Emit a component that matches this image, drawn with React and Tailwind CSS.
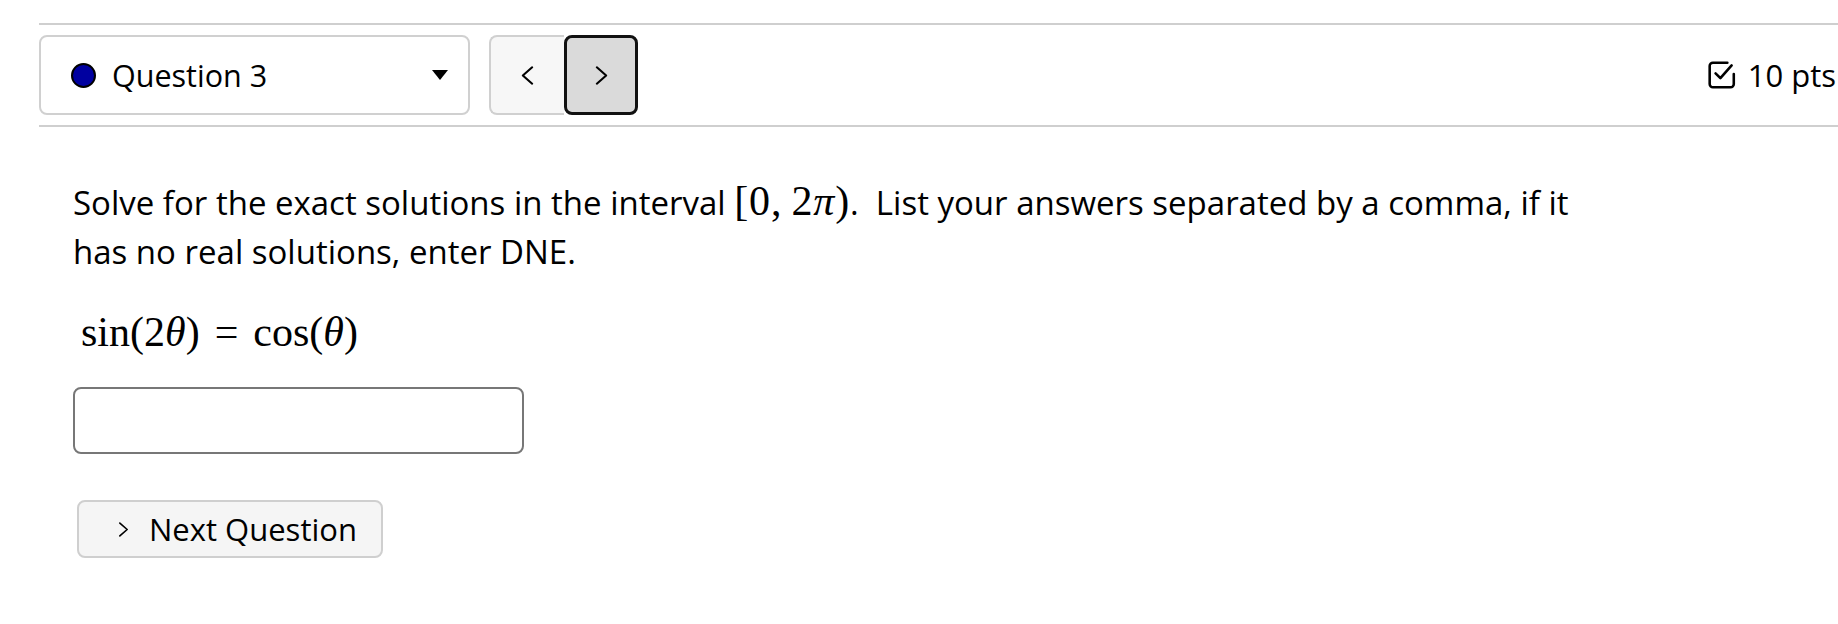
import React from "react";

const Chevron = ({ dir = "right", className = "" }) => (
  <svg viewBox="0 0 12 18" className={className} fill="none" stroke="currentColor" strokeWidth="1.8" strokeLinecap="round" strokeLinejoin="round">
    {dir === "right" ? <polyline points="2,2 10,9 2,16" /> : <polyline points="10,2 2,9 10,16" />}
  </svg>
);

const CheckBoxIcon = () => (
  <svg viewBox="0 0 28 28" className="w-[30px] h-[30px]" fill="none" stroke="currentColor" strokeWidth="2.4" strokeLinecap="round" strokeLinejoin="round">
    <path d="M25 13v9.5a3 3 0 0 1-3 3H5.5a3 3 0 0 1-3-3V5.5a3 3 0 0 1 3-3H19" />
    <polyline points="8,12.5 12.5,17 23,5" />
  </svg>
);

const App = () => {
  return (
    <div className="w-[1838px] h-[624px] bg-white text-black font-['Open_Sans',sans-serif] overflow-hidden">
      <div className="pl-[39px] pt-[23px]">
        <div className="flex items-center justify-between border-y-2 border-[#cfcfcf] py-[10px] pr-[2px]">
          <div className="flex items-center gap-[19px]">
            <div className="w-[431px] h-[80px] border-2 border-[#d0d0d0] rounded-[8px] flex items-center pl-[30px] pr-[20px]">
              <span className="w-[25px] h-[25px] rounded-full bg-[#0000a0] border-[2.5px] border-black" />
              <span className="ml-[16px] text-[30.5px] leading-none">Question 3</span>
              <svg viewBox="0 0 16 10" className="ml-auto w-[16px] h-[10px]">
                <polygon points="0,0 16,0 8,10" fill="black" />
              </svg>
            </div>
            <div className="flex h-[80px]">
              <button className="w-[75px] h-full bg-[#f7f7f7] border-2 border-r-0 border-[#d0d0d0] rounded-l-[8px] flex items-center justify-center">
                <Chevron dir="left" className="w-[15px] h-[21px]" />
              </button>
              <button className="w-[74px] h-full bg-[#dadada] border-[3px] border-[#111] rounded-[8px] flex items-center justify-center">
                <Chevron dir="right" className="w-[15px] h-[21px]" />
              </button>
            </div>
          </div>
          <div className="flex items-center gap-[11px] text-[31px]">
            <CheckBoxIcon />
            <span className="leading-none">10 pts</span>
          </div>
        </div>
      </div>

      <div className="pl-[73px]">
        <p className="mt-[51px] w-[1540px] text-[33px] leading-[49px]">
          Solve for the exact solutions in the interval{" "}
          <span className="font-['Liberation_Serif',serif] text-[42px] leading-none tracking-[0.02em]">
            [0,&thinsp;2<i>π</i>)
          </span>
          .&nbsp; List your answers separated by a comma, if it has no real solutions, enter DNE.
        </p>
        <div className="mt-[31px] h-[50px] leading-[50px] pl-[8px] font-['Liberation_Serif',serif] text-[42px]">
          sin(2<i>θ</i>)<span className="mx-[15px]">=</span>cos(<i>θ</i>)
        </div>
        <input
          type="text"
          className="block mt-[30px] w-[451px] h-[67px] border-2 border-[#777] rounded-[8px] bg-white"
        />
        <button className="mt-[46px] ml-[4px] w-[306px] h-[58px] bg-[#f5f5f5] border-2 border-[#cfcfcf] rounded-[8px] flex items-center pl-[39px] gap-[20px] text-[31px]">
          <Chevron dir="right" className="w-[11px] h-[17px]" />
          <span className="leading-none">Next Question</span>
        </button>
      </div>
    </div>
  );
};

export default App;
